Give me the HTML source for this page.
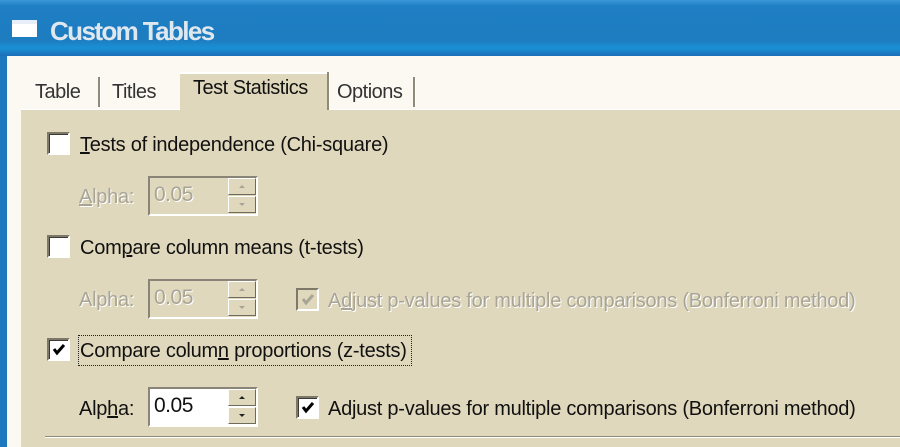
<!DOCTYPE html>
<html><head><style>
*{margin:0;padding:0;box-sizing:border-box}
body{width:900px;height:447px;overflow:hidden;background:#fbf9f2;position:relative;font-family:"Liberation Sans",Arial,sans-serif;}
.a{position:absolute}
.title{left:0;top:0;width:900px;height:56px;background:linear-gradient(#3a98d8 0,#1f7fc4 6px,#1e7cc0 40px,#1a90d4 48px,#1b6fb8 56px);}
.lb{left:0;top:56px;width:7px;height:391px;background:#1e78c0}
.panel{left:21px;top:109px;width:879px;height:338px;background:#e0d8bc;border-top:1px solid #fff}
.t{font-size:20px;letter-spacing:-0.25px;color:#111;white-space:nowrap;line-height:24px}
.g{color:#a8a496;text-shadow:1px 1px 0 #fff}
.cb{width:23px;height:23px;background:#fff;border:2px solid;border-color:#7e7868 #fff #fff #7e7868;box-shadow:inset 1px 1px 0 #3c3a34}
.cb.d{background:#e0d8bc}
.cb svg{position:absolute;left:2px;top:2px}
.spin{width:110px;height:40px;border:2px solid;border-color:#8a8476 #fff #fff #8a8476;background:#fff}
.spin.d{background:#e0d8bc}
.spin .v{position:absolute;left:4px;top:5px;font-size:21px;letter-spacing:-0.5px}
.btn{position:absolute;left:78px;width:28px;height:17px;background:#e0d8bc;border:1px solid;border-color:#fff #6e6a5c #6e6a5c #fff}
.btn i{position:absolute;left:10px;top:6px;width:0;height:0;border-left:3px solid transparent;border-right:3px solid transparent}
.up i{border-bottom:3px solid #222}.dn i{border-top:3px solid #222}
.d .up i{border-bottom-color:#a8a496}.d .dn i{border-top-color:#a8a496}
.tab{font-size:20px;letter-spacing:-0.5px;color:#333}
.sep{width:3px;height:30px;background:#8f8a7a;border-right:1px solid #fff}
</style></head><body>
<div class="a title"></div>
<div class="a" style="left:12px;top:20px;width:25px;height:17px;background:#fff;border-top:4px solid #e8eef8"></div>
<div class="a" style="left:50px;top:16px;font-size:26px;font-weight:bold;color:#dfe7ef;letter-spacing:-1.6px">Custom Tables</div>
<div class="a lb"></div>
<div class="a panel"></div>
<div class="a" style="left:180px;top:72px;width:150px;height:39px;background:#e0d8bc;border-top:2px solid #fff"></div>
<div class="a tab" style="left:35px;top:81px">Table</div>
<div class="a sep" style="left:98px;top:77px"></div>
<div class="a tab" style="left:112px;top:81px">Titles</div>
<div class="a tab" style="left:193px;top:77px;color:#111">Test Statistics</div>
<div class="a sep" style="left:327px;top:72px;height:38px"></div>
<div class="a tab" style="left:337px;top:81px">Options</div>
<div class="a sep" style="left:413px;top:77px"></div>

<div class="a cb" style="left:47px;top:132px"></div>
<div class="a t" style="left:80px;top:133px"><u>T</u>ests of independence (Chi-square)</div>
<div class="a t g" style="left:79px;top:185px"><u>A</u>lpha:</div>
<div class="a spin d" style="left:148px;top:176px"><span class="v g">0.05</span><div class="btn up" style="top:0"><i></i></div><div class="btn dn" style="top:18px"><i></i></div></div>

<div class="a cb" style="left:47px;top:235px"></div>
<div class="a t" style="left:80px;top:236px">Com<u>p</u>are column means (t-tests)</div>
<div class="a t g" style="left:79px;top:288px">Alpha:</div>
<div class="a spin d" style="left:148px;top:279px"><span class="v g">0.05</span><div class="btn up" style="top:0"><i></i></div><div class="btn dn" style="top:18px"><i></i></div></div>
<div class="a cb d" style="left:296px;top:288px;box-shadow:none"><svg width="16" height="16"><path d="M3 7 L6 11 L13 3" stroke="#a8a496" stroke-width="3" fill="none"/></svg></div>
<div class="a t g" style="left:328px;top:289px">A<u>d</u>just p-values for multiple comparisons (Bonferroni method)</div>

<div class="a cb" style="left:47px;top:338px"><svg width="16" height="16"><path d="M3 7 L6 11 L13 3" stroke="#000" stroke-width="3" fill="none"/></svg></div>
<div class="a" style="left:78px;top:335px;width:334px;height:31px;border:1px dotted #222"></div>
<div class="a t" style="left:80px;top:339px">Compare colum<u>n</u> proportions (z-tests)</div>
<div class="a t" style="left:79px;top:397px">Alp<u>h</u>a:</div>
<div class="a spin" style="left:148px;top:387px"><span class="v" style="color:#111">0.05</span><div class="btn up" style="top:0"><i></i></div><div class="btn dn" style="top:18px"><i></i></div></div>
<div class="a cb" style="left:296px;top:396px"><svg width="16" height="16"><path d="M3 7 L6 11 L13 3" stroke="#000" stroke-width="3" fill="none"/></svg></div>
<div class="a t" style="left:328px;top:397px">Ad<u>j</u>ust p-values for multiple comparisons (Bonferroni method)</div>

<div class="a" style="left:45px;top:436px;width:855px;height:2px;background:#8f8a7a;border-bottom:1px solid #fff"></div>
</body></html>
